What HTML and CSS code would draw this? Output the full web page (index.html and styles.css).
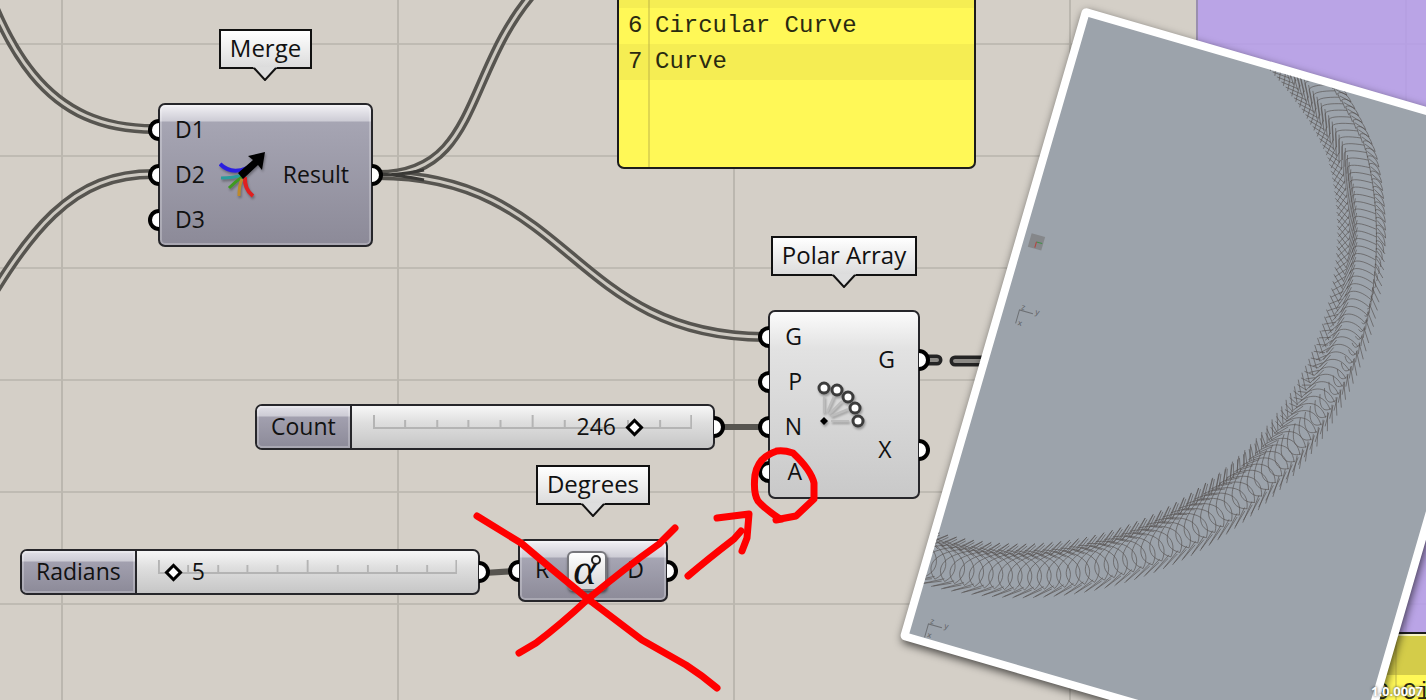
FILE: index.html
```html
<!DOCTYPE html>
<html lang="en">
	<head>
		<meta charset="utf-8">
		<title>Polar Array</title>
		<link rel="stylesheet" href="styles.css">
		<script src="coil.js" defer></script>
	</head>
	<body>
		<main class="canvas">
			<div class="group"></div>

			<!-- wires -->
			<svg class="layer" aria-hidden="true">
				<g class="wire-out">
					<path d="M-40 -100C0 60 50 129 154 129"/>
					<path d="M-42 356C30 220 75 174 154 174"/>
					<path d="M378 175C480 175 464 70 536 -10"/>
					<path d="M378 175C571 175 571 337 766 337"/>
				</g>
				<g class="wire-in">
					<path d="M-40 -100C0 60 50 129 154 129"/>
					<path d="M-42 356C30 220 75 174 154 174"/>
					<path d="M378 175C480 175 464 70 536 -10"/>
					<path d="M378 175C571 175 571 337 766 337"/>
				</g>
				<path class="wire-single" d="M718 427H766M484 573L516 571"/>
				<path class="wire-cross" d="M380 175Q400 175 424 170M380 174Q400 175 424 180"/>
				<path class="dash-out" d="M925 360H937M955 361H990"/>
				<path class="dash-in" d="M925 360H937M955 361H990"/>
			</svg>

			<!-- text panels -->
			<section class="panel panel-main">
				<ol class="rows">
					<li class="head"></li>
					<li><span class="num">6</span><span>Circular Curve</span></li>
					<li><span class="num">7</span><span>Curve</span></li>
				</ol>
			</section>
			<section class="panel panel-side">
				<ol class="rows">
					<li class="head"></li>
					<li><span class="num">0</span><span>Circular</span></li>
				</ol>
			</section>

			<!-- Merge -->
			<section class="node node-merge">
				<h2 class="tag">Merge<svg class="tip" viewBox="0 0 24 14"><path d="M0 0H24L12 13Z"/><path class="edge" d="M1 1L12 13L23 1"/></svg></h2>
				<div class="body dark">
					<ul class="inputs">
						<li>D1</li>
						<li>D2</li>
						<li>D3</li>
					</ul>
					<svg class="icon" viewBox="0 0 48 48">
						<g fill="none" stroke-width="4">
							<path stroke="#2a1fe0" d="M1 13Q12 24 28 17"/>
							<path stroke="#2a9c9c" stroke-width="3" d="M2 27Q14 27 24 24"/>
							<path stroke="#3f9a20" stroke-width="3" d="M10 37Q16 31 23 26"/>
							<path stroke="#bd8a2c" stroke-width="3" d="M20 45Q20 34 23 28"/>
							<path stroke="#e01f1f" d="M34 45Q25 38 26 26"/>
						</g>
						<path d="M19 22L34 9L29 5L46 1L43 19L39 14L24 28Z"/>
					</svg>
					<ul class="outputs">
						<li>Result</li>
					</ul>
				</div>
			</section>

			<!-- Polar Array -->
			<section class="node node-polar">
				<h2 class="tag">Polar Array<svg class="tip" viewBox="0 0 24 14"><path d="M0 0H24L12 13Z"/><path class="edge" d="M1 1L12 13L23 1"/></svg></h2>
				<div class="body light">
					<ul class="inputs">
						<li>G</li>
						<li>P</li>
						<li>N</li>
						<li>A</li>
					</ul>
					<svg class="icon" viewBox="0 0 48 48">
						<path stroke="#bcbcbc" stroke-width="2" d="M7 32V15M10 31L17 15M12 33L25 20M14 35L31 28M14 40H32"/>
						<g fill="#fff" stroke="#3c3c3c" stroke-width="3">
							<circle cx="7" cy="7" r="5"/>
							<circle cx="20" cy="9" r="5"/>
							<circle cx="31" cy="16" r="5"/>
							<circle cx="38" cy="27" r="5"/>
							<circle cx="41" cy="40" r="5"/>
						</g>
						<path d="M7 36L11 40L7 44L3 40Z"/>
					</svg>
					<ul class="outputs">
						<li>G</li>
						<li>X</li>
					</ul>
				</div>
			</section>

			<!-- Degrees -->
			<section class="node node-degrees">
				<h2 class="tag">Degrees<svg class="tip" viewBox="0 0 24 14"><path d="M0 0H24L12 13Z"/><path class="edge" d="M1 1L12 13L23 1"/></svg></h2>
				<div class="body dark">
					<ul class="inputs">
						<li>R</li>
					</ul>
					<div class="alpha">α<i></i></div>
					<ul class="outputs">
						<li>D</li>
					</ul>
				</div>
			</section>

			<!-- sliders -->
			<div class="slider slider-count">
				<label for="count">Count</label>
				<div class="track">
					<svg viewBox="0 0 318 14" preserveAspectRatio="none"><path d="M1 0V13H317V0M159 0V13M32 5V13M64 5V13M95 5V13M127 5V13M191 5V13M223 5V13M254 5V13M286 5V13"/></svg>
					<input id="count" type="range" min="0" max="300" value="246">
					<output for="count">246</output>
				</div>
			</div>
			<div class="slider slider-radians">
				<label for="radians">Radians</label>
				<div class="track">
					<svg viewBox="0 0 318 14" preserveAspectRatio="none"><path d="M1 0V13H317V0M159 0V13M32 5V13M64 5V13M95 5V13M127 5V13M191 5V13M223 5V13M254 5V13M286 5V13"/></svg>
					<input id="radians" type="range" min="0" max="100" value="5">
					<output for="radians">5</output>
				</div>
			</div>

			<!-- red pen marks -->
			<svg class="layer pen" aria-hidden="true">
				<path d="M477 516L521 543Q555 572 588 599L642 640L686 665Q703 676 717 688"/>
				<path d="M675 528L659 544Q625 568 588 599Q560 625 536 643L519 653"/>
				<path d="M688 576Q708 559 734 539L741 531"/>
				<path d="M717 518L749 514L747 538L742 551"/>
				<path d="M777 451Q758 457 755 475Q753 493 758 501Q765 509 780 519L796 516L814 499V483Q811 470 793 453Q784 450 777 451M776 520L782 519"/>
			</svg>

			<!-- viewport snapshot -->
			<figure class="photo">
				<svg>
					<g transform="rotate(-16.2) translate(-1087 -18)">
						<g id="coil" class="coil"></g>
						<g transform="rotate(16 1035 243)">
							<rect x="1028" y="236" width="14" height="14" fill="#85878a"/>
							<path stroke="#3f8f4a" d="M1035 243H1041"/>
							<path stroke="#b8403a" d="M1035 243V249"/>
						</g>
						<g class="axes" transform="translate(1018 311) rotate(16)">
							<path d="M0 14V0H14"/>
							<text x="1" y="-1">z</text>
							<text x="16" y="0">y</text>
							<text x="2" y="15">x</text>
						</g>
						<g class="axes" transform="translate(927 625) rotate(16)">
							<path d="M0 14V0H14"/>
							<text x="1" y="-1">z</text>
							<text x="16" y="0">y</text>
							<text x="2" y="13">x</text>
						</g>
					</g>
				</svg>
			</figure>

			<span class="version">1.0.0007</span>
		</main>
	</body>
</html>
```

FILE: styles.css
```css
*, *::before, *::after{
	box-sizing: border-box;
	margin: 0;
	padding: 0;
}
body{
	font-family: "Open Sans", "Noto Sans", sans-serif;
	font-size: 23px;
	color: #111;
}
ul, ol{
	list-style: none;
}
.canvas{
	position: relative;
	height: 100vh;
	overflow: hidden;
	background-color: #d4cfc7;
	background-image:
		linear-gradient(90deg, #bbb7af 2px, transparent 2px),
		linear-gradient(#bfbbb3 2px, transparent 2px);
	background-size: 336px 336px, 112px 112px;
	background-position: 61px 0, 0 43px;
}
.group{
	position: absolute;
	left: 1196px;
	right: 0;
	top: 0;
	height: 632px;
	border-left: 2px solid #9a8fae;
	background: rgba(181, 156, 235, 0.85);
}
.layer{
	position: absolute;
	left: 0;
	top: 0;
	width: 100%;
	height: 100%;
	fill: none;
}
.wire-out{
	stroke: #575550;
	stroke-width: 10;
}
.wire-in{
	stroke: #cdc9c1;
	stroke-width: 3;
}
.wire-single{
	stroke: #575550;
	stroke-width: 6;
}
.wire-cross{
	stroke: #3a3936;
	stroke-width: 3;
}
.dash-out{
	stroke: #242424;
	stroke-width: 11;
	stroke-linecap: round;
}
.dash-in{
	stroke: #8c8a86;
	stroke-width: 4;
	stroke-linecap: round;
}

/* panels */
.panel{
	position: absolute;
	border: 2px solid #1c1c1c;
	border-radius: 7px;
	background: linear-gradient(90deg, transparent 29px, #dfd750 29px, #dfd750 31px, transparent 31px) #fff857;
	color: #2a2a10;
	font: 24px/36px "Courier New", "Liberation Mono", monospace;
	white-space: nowrap;
	overflow: hidden;
}
.panel-main{
	left: 617px;
	top: -37px;
	width: 359px;
	height: 206px;
}
.panel-side{
	left: 1364px;
	top: 632px;
	width: 359px;
	height: 199px;
}
.rows li{
	display: flex;
	height: 36px;
}
.panel-main li:nth-child(odd){
	background: rgba(190, 180, 60, 0.16);
}
.rows .head{
	height: 43px;
}
.panel-side .head{
	height: 41px;
	border-top: 2px solid #f7f3c8;
	background: rgba(170, 160, 60, 0.5);
}
.rows .num{
	width: 36px;
	padding-left: 9px;
}

/* components */
.node{
	position: absolute;
	display: flex;
	flex-direction: column;
	align-items: center;
	gap: 34px;
}
.node-merge{
	left: 158px;
	top: 29px;
	width: 215px;
}
.node-polar{
	left: 768px;
	top: 236px;
	width: 152px;
}
.node-degrees{
	left: 518px;
	top: 465px;
	width: 150px;
}
.tag{
	position: relative;
	height: 40px;
	padding: 0 9px;
	border: 2px solid #111;
	background: linear-gradient(#fff, #dcdcdc);
	font-size: 24px;
	font-weight: 400;
	line-height: 34px;
	white-space: nowrap;
}
.tip{
	position: absolute;
	left: calc(50% - 12px);
	top: 36px;
	width: 24px;
	height: 14px;
	fill: #dedede;
}
.tip .edge{
	fill: none;
	stroke: #111;
	stroke-width: 2;
}
.body{
	display: flex;
	align-items: center;
	width: 100%;
	border: 2px solid #26262a;
	border-radius: 7px;
}
.dark,
.slider label{
	background: linear-gradient(#f2f1f5 0, #cdccd5 16px, #a6a5b3 17px, #8c8a98 100%);
	box-shadow: inset 0 0 0 2px rgba(255, 255, 255, 0.25);
}
.slider label{
	background: linear-gradient(#e2e1e8 0, #cdccd5 10px, #a2a0af 11px, #8c8a98 100%);
}
.light{
	background: linear-gradient(#fbfbfb, #e2e2e2 20%, #c9c9c9);
}
.body li{
	position: relative;
	height: 45px;
	line-height: 43px;
}
.inputs li::before,
.outputs li::after,
.slider::after{
	content: "";
	position: absolute;
	top: calc(50% - 11px);
	width: 11px;
	height: 22px;
	border: 4px solid #000;
	background: #fff;
}
.inputs li::before{
	left: -12px;
	border-right: 0;
	border-radius: 11px 0 0 11px;
}
.outputs li::after,
.slider::after{
	right: -12px;
	border-left: 0;
	border-radius: 0 11px 11px 0;
}
.inputs li{
	padding-left: 15px;
}
.outputs{
	margin-left: auto;
}
.outputs li{
	padding-right: 22px;
}
.icon{
	width: 48px;
	height: 48px;
	filter: drop-shadow(1px 2px 1px rgba(0, 0, 0, 0.3));
}
.node-merge .body{
	height: 144px;
}
.node-merge .icon{
	margin-left: 14px;
}
.node-polar .body{
	height: 189px;
}
.node-polar .inputs li{
	width: 32px;
	padding-left: 0;
	text-align: right;
}
.node-polar .icon{
	margin-left: 15px;
}
.node-polar .outputs li{
	height: 90px;
	padding-right: 23px;
	line-height: 88px;
}
.node-degrees .body{
	height: 63px;
}
.alpha{
	position: relative;
	width: 40px;
	height: 40px;
	margin-left: 18px;
	border: 2px solid #77777c;
	border-radius: 6px;
	background: linear-gradient(#fff, #d6d6d6);
	box-shadow: 1px 2px 3px rgba(0, 0, 0, 0.5);
	font: italic 44px/34px "Liberation Serif", serif;
	padding-left: 4px;
}
.alpha i{
	position: absolute;
	right: 4px;
	top: 2px;
	width: 10px;
	height: 10px;
	border: 2px solid #222;
	border-radius: 50%;
}

/* number sliders */
.slider{
	position: absolute;
	display: flex;
	height: 46px;
	border: 2px solid #26262a;
	border-radius: 7px;
	background: linear-gradient(#f7f7f7, #dedede 40%, #c6c6c6);
}
.slider-count{
	left: 255px;
	top: 404px;
	width: 460px;
}
.slider-radians{
	left: 20px;
	top: 549px;
	width: 460px;
}
.slider label{
	padding: 0 14px;
	border-right: 2px solid #26262a;
	border-radius: 5px 0 0 5px;
	line-height: 41px;
}
.track{
	position: relative;
	flex: 1;
	margin: 0 21px;
}
.track svg{
	position: absolute;
	left: 0;
	top: 9px;
	width: 100%;
	height: 14px;
	fill: none;
	stroke: #b4b4b4;
	stroke-width: 2;
}
.track input{
	position: absolute;
	left: -6px;
	top: 0;
	width: calc(100% + 12px);
	height: 42px;
	appearance: none;
	background: none;
}
.track input::-webkit-slider-thumb{
	appearance: none;
	width: 13px;
	height: 13px;
	border: 3px solid #000;
	background: #fff;
	transform: rotate(45deg);
}
.track output{
	position: absolute;
	line-height: 41px;
}
.slider-count output{
	right: 76px;
}
.slider-radians output{
	left: 34px;
}

.pen{
	stroke: #f00;
	stroke-width: 7;
	stroke-linecap: round;
	stroke-linejoin: round;
}

/* snapshot */
.photo{
	position: absolute;
	left: 1083px;
	top: 7px;
	width: 478px;
	height: 658px;
	border: 8px solid #fff;
	border-radius: 5px;
	background: #9ca3ab;
	box-shadow: 2px 3px 9px rgba(0, 0, 0, 0.65);
	transform: rotate(16.2deg);
	transform-origin: 0 0;
}
.photo svg{
	display: block;
	width: 100%;
	height: 100%;
}
.coil{
	fill: none;
	stroke: #55514f;
	stroke-width: 0.8;
	stroke-opacity: 0.8;
}
.axes{
	fill: #5d6064;
	font: 8px "Open Sans", sans-serif;
}
.axes path{
	fill: none;
	stroke: #6c6f73;
}
.version{
	position: absolute;
	right: 3px;
	bottom: 0;
	color: #fff;
	font: bold 13px/18px "Open Sans", sans-serif;
	text-shadow: 0 0 3px #333;
}
```

FILE: coil.js
```js
// one wire profile repeated around the centre, blended from side to bottom
var SVG = 'http://www.w3.org/2000/svg';
var coil = document.getElementById('coil');
var cx = 1020, cy = 237;

// strands of [radial, tangential] points, four points make a curve
var side = [
	[[0,-6],[11,8]],
	[[1,5],[12,-8]],
	[[11,16],[17,-6]],
	[[17,-6],[18,-10],[28,-7],[39,-2]],
	[[15,14],[20,-4]],
	[[39,-6],[39,3]],
	[[39,-6],[44,-7],[48,-1],[48,7]],
	[[48,7],[40,-3]]
];
var bottom = [
	[[0,-8],[11,5]],
	[[2,-9],[13,4]],
	[[0,-8],[10,6]],
	[[6,20],[12,-8],[30,-24],[46,-7]],
	[[10,8],[16,-2]],
	[[46,-14],[53,3]],
	[[46,-7],[34,8],[18,-2],[8,-30]],
	[[54,5],[43,-16]]
];

function point(p, a, r){
	var rad = r + p[0], t = p[1];
	var x = cx + rad * Math.cos(a) - t * Math.sin(a);
	var y = cy + rad * Math.sin(a) + t * Math.cos(a);
	return x.toFixed(1) + ' ' + y.toFixed(1);
}

var deg = -42;
while(deg < 114){
	var a = deg * Math.PI / 180;
	var k = Math.min(1, Math.max(0, deg / 55));
	var r = 316 - 8 * k - Math.max(0, -deg - 14) * 0.9;
	var d = '';
	for(var i = 0; i < side.length; i++){
		var pts = side[i].map(function(s, j){
			var b = bottom[i][j];
			return point([s[0] + (b[0] - s[0]) * k, s[1] + (b[1] - s[1]) * k], a, r);
		});
		d += 'M' + pts[0] + (pts.length == 4 ? 'C' : 'L') + pts.slice(1).join(' ');
	}
	var path = document.createElementNS(SVG, 'path');
	path.setAttribute('d', d);
	coil.appendChild(path);
	// rings sit wider apart towards the bottom
	deg += 1.25 + 0.38 * k;
}
```
